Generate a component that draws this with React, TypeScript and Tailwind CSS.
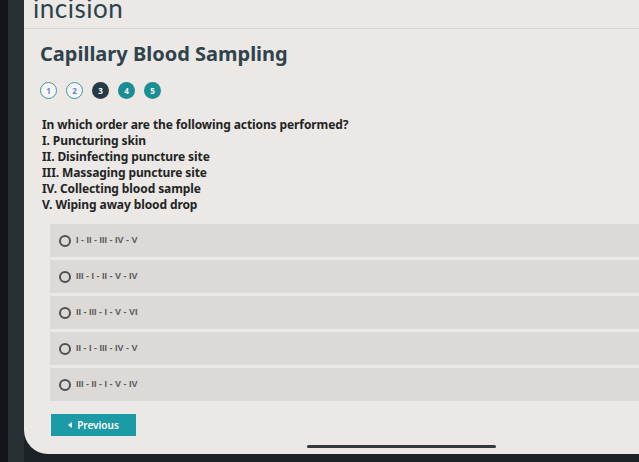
const STEPS = [
  { n: 1, state: 'done' },
  { n: 2, state: 'done' },
  { n: 3, state: 'current' },
  { n: 4, state: 'todo' },
  { n: 5, state: 'todo' },
];

const ACTIONS = [
  'I. Puncturing skin',
  'II. Disinfecting puncture site',
  'III. Massaging puncture site',
  'IV. Collecting blood sample',
  'V. Wiping away blood drop',
];

const OPTIONS = [
  'I - II - III - IV - V',
  'III - I - II - V - IV',
  'II - III - I - V - VI',
  'II - I - III - IV - V',
  'III - II - I - V - IV',
];

function StepDot({ n, state }: { n: number; state: string }) {
  const cls =
    state === 'done'
      ? 'bg-[#f6f6f6] border-[1.5px] border-[#3f979b] text-[#6f7fd2]'
      : state === 'current'
      ? 'bg-[#253a44] text-white'
      : 'bg-[#1b8d95] text-white';
  return (
    <div className={`w-[17px] h-[17px] rounded-full flex items-center justify-center text-[8px] font-bold ${cls}`}>
      {n}
    </div>
  );
}

export default function App() {
  return (
    <div className="w-[639px] h-[462px] bg-[#1c2226] flex overflow-hidden" style={{ fontFamily: '"Noto Sans", "Liberation Sans", sans-serif' }}>
      {/* bezel */}
      <div className="w-[8px] bg-[#121517]" />
      <div className="w-[16px] bg-[#283034]" />

      <div className="flex-1 flex flex-col">
        <div className="relative flex-1 bg-[#ebe8e5] rounded-bl-[24px] flex flex-col overflow-hidden">
          {/* header */}
          <div className="h-[29px] border-b border-[#d9d5d2] pl-[9px] overflow-hidden shrink-0">
            <div className="text-[26px] leading-none font-normal text-[#2b434d] -mt-[5px] tracking-[0.5px]" style={{ fontFamily: 'Lato, "Noto Sans", sans-serif' }}>
              incision
            </div>
          </div>

          <div className="pl-[16px] flex flex-col">
            <h1 className="mt-[13px] text-[20px] leading-[24px] font-bold text-[#2f434c]">Capillary Blood Sampling</h1>

            <div className="mt-[16px] flex gap-[9px]">
              {STEPS.map((s) => (
                <StepDot key={s.n} n={s.n} state={s.state} />
              ))}
            </div>

            <div className="mt-[18px] ml-[2px] text-[12px] leading-[16px] font-bold text-[#242424] tracking-[-0.1px]">
              <p>In which order are the following actions performed?</p>
              {ACTIONS.map((a) => (
                <p key={a}>{a}</p>
              ))}
            </div>

            <div className="mt-[11px] ml-[10px] flex flex-col gap-[3px]">
              {OPTIONS.map((o) => (
                <label key={o} className="h-[33px] bg-[#dcd9d6] flex items-center pl-[9px] gap-[5px]">
                  <span className="w-[12px] h-[12px] rounded-full border-[2px] border-[#505050]" />
                  <span className="text-[9px] font-bold text-[#5a5a5a]" style={{ fontFamily: '"Liberation Sans", sans-serif' }}>
                    {o}
                  </span>
                </label>
              ))}
            </div>

            <button className="mt-[13px] ml-[11px] w-[85px] h-[22px] bg-[#1c9aa5] text-white text-[10px] font-semibold flex items-center justify-center gap-[5px]">
              <svg width="4" height="6" viewBox="0 0 4 6">
                <path d="M4 0 L0 3 L4 6 Z" fill="white" />
              </svg>
              Previous
            </button>
          </div>

          {/* home indicator */}
          <div className="absolute left-[283px] bottom-[6px] w-[189px] h-[3px] rounded-full bg-[#333a3d]" />
        </div>
        <div className="h-[8px]" />
      </div>
    </div>
  );
}
